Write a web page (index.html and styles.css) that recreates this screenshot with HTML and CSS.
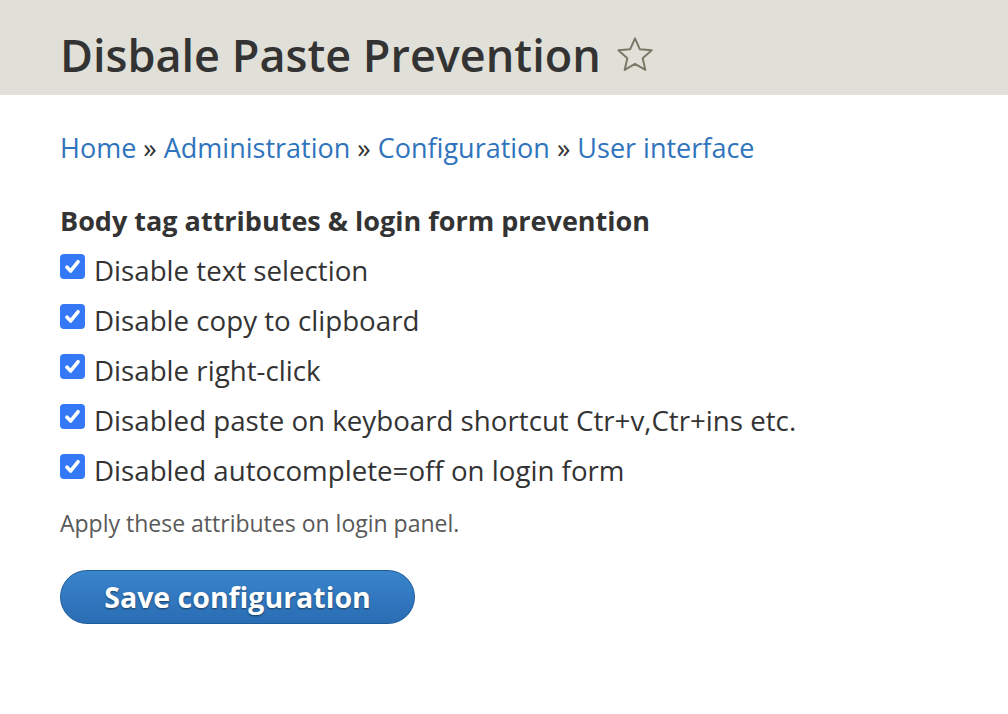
FILE: index.html
```html
<!DOCTYPE html>
<html lang="en">
<head>
  <meta charset="UTF-8" />
  <title>Disbale Paste Prevention</title>
  <link rel="stylesheet" href="styles.css">
</head>
<body>
  <div class="cabecalho">
    <h1>Disbale Paste Prevention</h1>
    <svg class="estrela" width="40" height="40" viewBox="0 0 36 36">
      <path d="M18 3 L22.3 12.8 L33 13.8 L24.9 20.9 L27.3 31.4 L18 25.9 L8.7 31.4 L11.1 20.9 L3 13.8 L13.7 12.8 Z" fill="none" stroke="#7a7967" stroke-width="1.8" stroke-linejoin="round"/>
    </svg>
  </div>

  <div class="conteudo">
    <div class="trilha">
      <a href="#">Home</a> » <a href="#">Administration</a> » <a href="#">Configuration</a> » <a href="#">User interface</a>
    </div>

    <div class="grupo">
      <div class="titulo-grupo">Body tag attributes &amp; login form prevention</div>
      <label class="opcao"><span class="caixa"><svg viewBox="0 0 16 16"><path d="M3.8 8.6 L6.6 11.4 L12.2 4.4" fill="none" stroke="#fff" stroke-width="2.8" stroke-linecap="round" stroke-linejoin="round"/></svg></span>Disable text selection</label>
      <label class="opcao"><span class="caixa"><svg viewBox="0 0 16 16"><path d="M3.8 8.6 L6.6 11.4 L12.2 4.4" fill="none" stroke="#fff" stroke-width="2.8" stroke-linecap="round" stroke-linejoin="round"/></svg></span>Disable copy to clipboard</label>
      <label class="opcao"><span class="caixa"><svg viewBox="0 0 16 16"><path d="M3.8 8.6 L6.6 11.4 L12.2 4.4" fill="none" stroke="#fff" stroke-width="2.8" stroke-linecap="round" stroke-linejoin="round"/></svg></span>Disable right-click</label>
      <label class="opcao"><span class="caixa"><svg viewBox="0 0 16 16"><path d="M3.8 8.6 L6.6 11.4 L12.2 4.4" fill="none" stroke="#fff" stroke-width="2.8" stroke-linecap="round" stroke-linejoin="round"/></svg></span>Disabled paste on keyboard shortcut Ctr+v,Ctr+ins etc.</label>
      <label class="opcao"><span class="caixa"><svg viewBox="0 0 16 16"><path d="M3.8 8.6 L6.6 11.4 L12.2 4.4" fill="none" stroke="#fff" stroke-width="2.8" stroke-linecap="round" stroke-linejoin="round"/></svg></span>Disabled autocomplete=off on login form</label>
      <div class="descricao">Apply these attributes on login panel.</div>
    </div>

    <button class="salvar">Save configuration</button>
  </div>
</body>
</html>
```

FILE: styles.css
```css
body {
  margin: 0;
  background: #fff;
  color: #333;
  font-family: 'Open Sans', 'DejaVu Sans', sans-serif;
}
.cabecalho {
  background: #e0e0d8;
  height: 95px;
  box-sizing: border-box;
  padding: 15px 60px 0;
  display: flex;
  align-items: center;
  gap: 14px;
}
h1 {
  margin: 0;
  font-size: 45px;
  line-height: 60px;
  font-weight: 600;
  color: #333;
}
.conteudo {
  padding: 34px 60px 30px;
}
.trilha {
  font-size: 27px;
  line-height: 38px;
  color: #333;
}
.trilha a {
  color: #2f74bd;
  text-decoration: none;
}
.grupo {
  margin-top: 36px;
}
.titulo-grupo {
  font-size: 27px;
  line-height: 36px;
  font-weight: 700;
  margin-bottom: 6px;
}
.opcao {
  display: flex;
  align-items: center;
  height: 50px;
  font-size: 27.7px;
}
.caixa {
  width: 25px;
  height: 25px;
  flex: none;
  border-radius: 4px;
  background: #3478f6;
  display: flex;
  align-items: center;
  justify-content: center;
  margin-right: 9px;
  margin-top: -7px;
}
.caixa svg {
  width: 21px;
  height: 21px;
}
.descricao {
  font-size: 23px;
  line-height: 30px;
  color: #595959;
  margin-top: 13px;
}
.salvar {
  display: block;
  margin-top: 32px;
  width: 355px;
  height: 54px;
  border-radius: 27px;
  border: 1px solid #1e5c99;
  background: linear-gradient(#3a84cc, #2a6db4);
  color: #fff;
  font-family: 'Open Sans', 'DejaVu Sans', sans-serif;
  font-size: 28.5px;
  font-weight: 700;
  text-shadow: 0 1px 2px rgba(0, 0, 0, 0.5);
}
```
